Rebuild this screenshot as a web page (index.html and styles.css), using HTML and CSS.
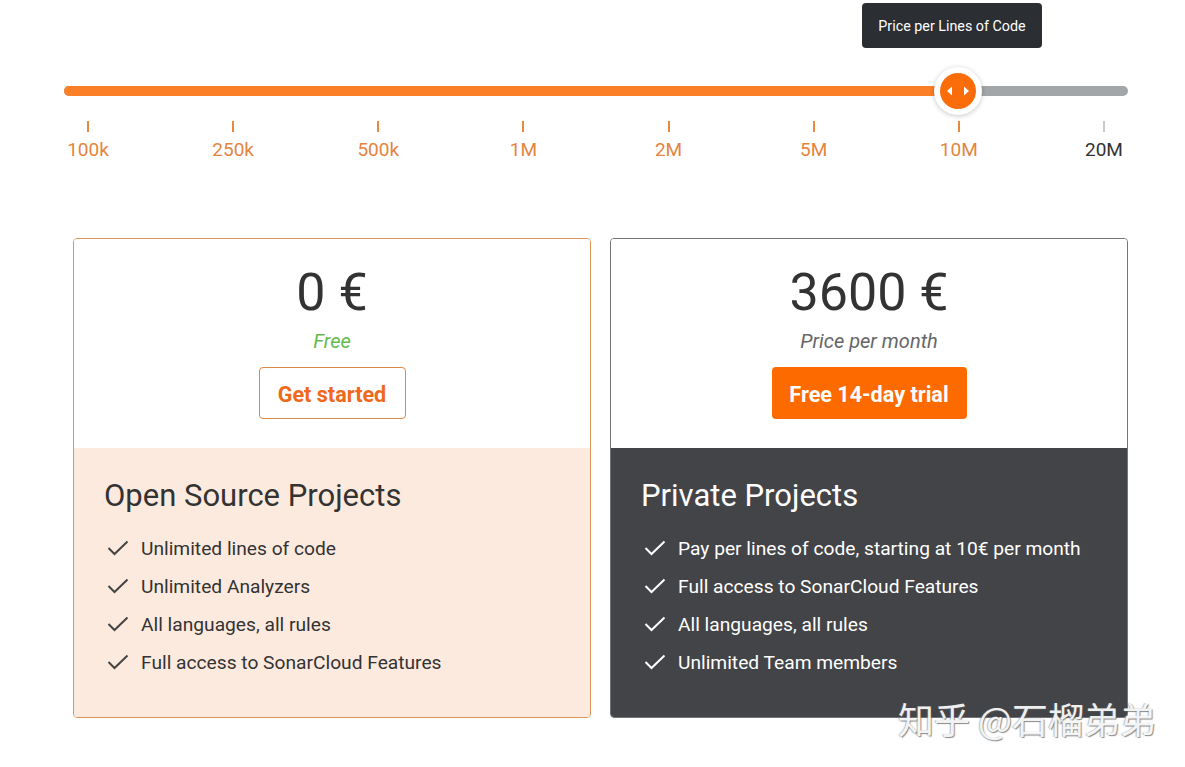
FILE: index.html
```html
<!DOCTYPE html>
<html lang="en">
<head>
<meta charset="utf-8">
<title>SonarCloud Pricing</title>
<link rel="stylesheet" href="styles.css">
</head>
<body>
<div class="page">
  <div class="tooltip">Price per Lines of Code</div>
  <div class="slider">
    <div class="track">
      <div class="fill" style="width: 894px"></div>
      <div class="thumb" style="left: 894px">
        <span class="knob">
          <svg width="22" height="10" viewBox="0 0 22 10"><polygon points="0,5 5,0.5 5,9.5" fill="#fff"/><polygon points="22,5 17,0.5 17,9.5" fill="#fff"/></svg>
        </span>
      </div>
    </div>
    <div class="ticks">
      <div class="tick active"><span class="mark"></span><span class="label">100k</span></div>
      <div class="tick active"><span class="mark"></span><span class="label">250k</span></div>
      <div class="tick active"><span class="mark"></span><span class="label">500k</span></div>
      <div class="tick active"><span class="mark"></span><span class="label">1M</span></div>
      <div class="tick active"><span class="mark"></span><span class="label">2M</span></div>
      <div class="tick active"><span class="mark"></span><span class="label">5M</span></div>
      <div class="tick active"><span class="mark"></span><span class="label">10M</span></div>
      <div class="tick"><span class="mark"></span><span class="label">20M</span></div>
    </div>
  </div>

  <div class="plans">
    <div class="card card-free">
      <div class="card-top">
        <div class="price">0 €</div>
        <div class="subtitle free">Free</div>
        <a class="btn btn-outline">Get started</a>
      </div>
      <div class="card-body">
        <h2 class="card-title">Open Source Projects</h2>
        <ul class="features">
          <li><svg class="check" width="22" height="16" viewBox="0 0 22 16"><polyline points="1.5,8 7.5,14 20.5,1.5" fill="none" stroke="currentColor" stroke-width="2"/></svg>Unlimited lines of code</li>
          <li><svg class="check" width="22" height="16" viewBox="0 0 22 16"><polyline points="1.5,8 7.5,14 20.5,1.5" fill="none" stroke="currentColor" stroke-width="2"/></svg>Unlimited Analyzers</li>
          <li><svg class="check" width="22" height="16" viewBox="0 0 22 16"><polyline points="1.5,8 7.5,14 20.5,1.5" fill="none" stroke="currentColor" stroke-width="2"/></svg>All languages, all rules</li>
          <li><svg class="check" width="22" height="16" viewBox="0 0 22 16"><polyline points="1.5,8 7.5,14 20.5,1.5" fill="none" stroke="currentColor" stroke-width="2"/></svg>Full access to SonarCloud Features</li>
        </ul>
      </div>
    </div>

    <div class="card card-paid">
      <div class="card-top">
        <div class="price">3600 €</div>
        <div class="subtitle">Price per month</div>
        <a class="btn btn-solid">Free 14-day trial</a>
      </div>
      <div class="card-body">
        <h2 class="card-title">Private Projects</h2>
        <ul class="features">
          <li><svg class="check" width="22" height="16" viewBox="0 0 22 16"><polyline points="1.5,8 7.5,14 20.5,1.5" fill="none" stroke="currentColor" stroke-width="2"/></svg>Pay per lines of code, starting at 10€ per month</li>
          <li><svg class="check" width="22" height="16" viewBox="0 0 22 16"><polyline points="1.5,8 7.5,14 20.5,1.5" fill="none" stroke="currentColor" stroke-width="2"/></svg>Full access to SonarCloud Features</li>
          <li><svg class="check" width="22" height="16" viewBox="0 0 22 16"><polyline points="1.5,8 7.5,14 20.5,1.5" fill="none" stroke="currentColor" stroke-width="2"/></svg>All languages, all rules</li>
          <li><svg class="check" width="22" height="16" viewBox="0 0 22 16"><polyline points="1.5,8 7.5,14 20.5,1.5" fill="none" stroke="currentColor" stroke-width="2"/></svg>Unlimited Team members</li>
        </ul>
      </div>
    </div>
  </div>

  <div class="watermark">知乎 @石榴弟弟</div>
</div>
</body>
</html>
```

FILE: styles.css
```css
* { box-sizing: border-box; }
html, body { margin: 0; padding: 0; background: #fff; }
body {
  font-family: Roboto, "Noto Sans", "Liberation Sans", sans-serif;
  color: #333;
  width: 1185px;
  height: 767px;
  overflow: hidden;
}
.page {
  position: relative;
  padding: 86px 57px 0 64px;
  height: 767px;
}
.tooltip {
  position: absolute;
  left: 862px;
  top: 3px;
  width: 180px;
  height: 45px;
  background: #2b2e33;
  color: #fff;
  border-radius: 4px;
  font-size: 14.3px;
  line-height: 46px;
  text-align: center;
}
.slider { width: 1064px; }
.track {
  position: relative;
  height: 10px;
  background: #a2a6a8;
  border-radius: 5px;
}
.fill {
  height: 10px;
  background: #fb7f26;
  border-radius: 5px 0 0 5px;
}
.thumb {
  position: absolute;
  top: 5px;
  width: 48px;
  height: 48px;
  margin: -24px 0 0 -24px;
  border-radius: 50%;
  background: #fff;
  box-shadow: 0 1px 5px rgba(0,0,0,0.22);
  display: flex;
  align-items: center;
  justify-content: center;
}
.knob {
  width: 36px;
  height: 36px;
  border-radius: 50%;
  background: #fb6c0a;
  display: flex;
  align-items: center;
  justify-content: center;
}
.knob svg { display: block; }
.ticks {
  display: flex;
  justify-content: space-between;
  margin-top: 25px;
}
.tick {
  width: 48px;
  display: flex;
  flex-direction: column;
  align-items: center;
}
.mark {
  width: 2px;
  height: 11px;
  background: #c9cbcc;
}
.label {
  margin-top: 7px;
  font-size: 19px;
  line-height: 22px;
  color: #333;
  white-space: nowrap;
}
.tick.active .mark { background: #e8893f; }
.tick.active .label { color: #e5843f; }

.plans {
  display: flex;
  gap: 19px;
  margin: 77px 0 0 9px;
}
.card {
  width: 518px;
  height: 480px;
  border: 1px solid #dc9657;
  border-radius: 4px;
  overflow: hidden;
  display: flex;
  flex-direction: column;
}
.card-paid { border-color: #727477; }
.card-top {
  height: 209px;
  background: #fff;
  display: flex;
  flex-direction: column;
  align-items: center;
  padding-top: 24px;
}
.price {
  font-size: 52px;
  line-height: 60px;
  color: #333;
}
.subtitle {
  margin-top: 7px;
  font-size: 20px;
  line-height: 22px;
  font-style: italic;
  color: #666;
}
.subtitle.free { color: #64bb4c; }
.btn {
  margin-top: 15px;
  height: 52px;
  display: flex;
  align-items: center;
  justify-content: center;
  padding-top: 3px;
  border-radius: 4px;
  font-size: 21.6px;
  font-weight: 700;
}
.btn-outline {
  width: 147px;
  border: 1px solid #d9894a;
  color: #f0691a;
}
.btn-solid {
  width: 195px;
  background: #fd6b00;
  color: #fff;
}
.card-body {
  flex: 1;
  padding: 30px 20px 0 30px;
}
.card-free .card-body { background: #fdeadf; }
.card-paid .card-body { background: #434447; color: #fff; }
.card-title {
  margin: 0;
  font-size: 31px;
  line-height: 36px;
  font-weight: 400;
}
.features {
  list-style: none;
  margin: 15px 0 0;
  padding: 0;
}
.features li {
  display: flex;
  align-items: center;
  height: 38px;
  font-size: 19.2px;
}
.card-free .features li { color: #333; }
.card-free .check { color: #444; }
.check {
  margin: 0 12px 0 3px;
  flex: none;
}
.watermark {
  position: absolute;
  left: 898px;
  top: 694px;
  font-family: "Noto Sans CJK SC", sans-serif;
  font-size: 36px;
  line-height: 48px;
  color: rgba(255,255,255,0.92);
  text-shadow: 1px 1px 1px rgba(90,90,90,0.7), -1px 0 1px rgba(120,120,120,0.5);
  white-space: nowrap;
}
```
